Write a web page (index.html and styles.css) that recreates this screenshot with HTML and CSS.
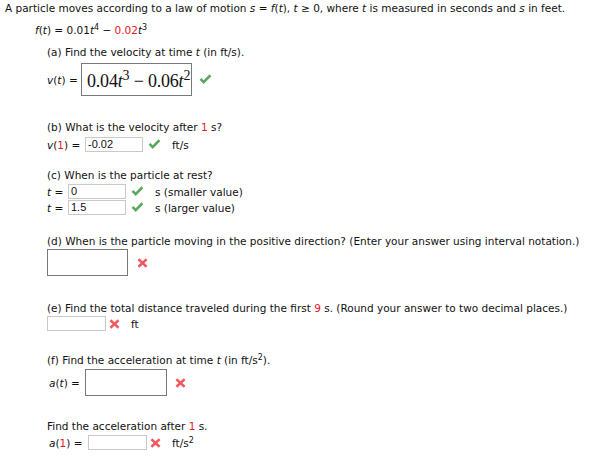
FILE: index.html
```html
<!DOCTYPE html>
<html>
<head>
<meta charset="utf-8">
<link rel="stylesheet" href="styles.css">
</head>
<body>
<div class="page">
  <p class="line intro">A particle moves according to a law of motion <i>s</i> = <i>f</i>(<i>t</i>), <i>t</i> ≥ 0, where <i>t</i> is measured in seconds and <i>s</i> in feet.</p>
  <p class="line eq"><i>f</i>(<i>t</i>) = 0.01<i>t</i><sup>4</sup> − <span class="red">0.02</span><i>t</i><sup>3</sup></p>

  <p class="line part gap-a">(a) Find the velocity at time <i>t</i> (in ft/s).</p>
  <div class="row part row-vt">
    <span class="lbl lbl-vt"><i>v</i>(<i>t</i>) =</span>
    <span class="mathbox"><span class="math">0.04<i>t</i><sup>3</sup> − 0.06<i>t</i><sup>2</sup></span></span>
    <svg class="ok ok-vt" viewBox="0 0 14 12"><path d="M0.6 6.4 L2.6 4.4 L5 6.8 L11.4 0.4 L13.4 2.4 L5 10.8 Z" fill="#5aa85c"/></svg>
  </div>

  <p class="line part gap-b">(b) What is the velocity after <span class="red">1</span> s?</p>
  <div class="row part row-small gap-b2">
    <span class="lbl lbl-v1"><i>v</i>(<span class="red">1</span>) =</span>
    <span class="inp inp-v1">-0.02</span>
    <svg class="ok" viewBox="0 0 14 12"><path d="M0.6 6.4 L2.6 4.4 L5 6.8 L11.4 0.4 L13.4 2.4 L5 10.8 Z" fill="#5aa85c"/></svg>
    <span class="unit">ft/s</span>
  </div>

  <p class="line part gap-c">(c) When is the particle at rest?</p>
  <div class="rest part">
    <div class="row row-small">
      <span class="lbl lbl-t"><i>t</i> =</span>
      <span class="inp inp-t">0</span>
      <svg class="ok" viewBox="0 0 14 12"><path d="M0.6 6.4 L2.6 4.4 L5 6.8 L11.4 0.4 L13.4 2.4 L5 10.8 Z" fill="#5aa85c"/></svg>
      <span class="unit">s (smaller value)</span>
    </div>
    <div class="row row-small">
      <span class="lbl lbl-t"><i>t</i> =</span>
      <span class="inp inp-t">1.5</span>
      <svg class="ok" viewBox="0 0 14 12"><path d="M0.6 6.4 L2.6 4.4 L5 6.8 L11.4 0.4 L13.4 2.4 L5 10.8 Z" fill="#5aa85c"/></svg>
      <span class="unit">s (larger value)</span>
    </div>
  </div>

  <p class="line part gap-d">(d) When is the particle moving in the positive direction? (Enter your answer using interval notation.)</p>
  <div class="row part row-d">
    <span class="bigbox box-d"></span>
    <svg class="bad bad-d" viewBox="0 0 12 11"><path d="M0.6 2.4 L2.4 0.4 L6 3.6 L9.6 0.4 L11.4 2.4 L8 5.5 L11.4 8.6 L9.6 10.6 L6 7.4 L2.4 10.6 L0.6 8.6 L4 5.5 Z" fill="#f2575e"/></svg>
  </div>

  <p class="line part gap-e">(e) Find the total distance traveled during the first <span class="red">9</span> s. (Round your answer to two decimal places.)</p>
  <div class="row part row-small">
    <span class="inp inp-e"></span>
    <svg class="bad bad-e" viewBox="0 0 12 11"><path d="M0.6 2.4 L2.4 0.4 L6 3.6 L9.6 0.4 L11.4 2.4 L8 5.5 L11.4 8.6 L9.6 10.6 L6 7.4 L2.4 10.6 L0.6 8.6 L4 5.5 Z" fill="#f2575e"/></svg>
    <span class="unit unit-e">ft</span>
  </div>

  <p class="line part gap-f">(f) Find the acceleration at time <i>t</i> (in ft/s<sup class="s2">2</sup>).</p>
  <div class="row part row-d gap-f2">
    <span class="lbl lbl-a"><i>a</i>(<i>t</i>) =</span>
    <span class="bigbox box-f"></span>
    <svg class="bad bad-f" viewBox="0 0 12 11"><path d="M0.6 2.4 L2.4 0.4 L6 3.6 L9.6 0.4 L11.4 2.4 L8 5.5 L11.4 8.6 L9.6 10.6 L6 7.4 L2.4 10.6 L0.6 8.6 L4 5.5 Z" fill="#f2575e"/></svg>
  </div>

  <p class="line part gap-g">Find the acceleration after <span class="red">1</span> s.</p>
  <div class="row part row-small gap-f2">
    <span class="lbl lbl-a1"><i>a</i>(<span class="red">1</span>) =</span>
    <span class="inp inp-a1"></span>
    <svg class="bad bad-e" viewBox="0 0 12 11"><path d="M0.6 2.4 L2.4 0.4 L6 3.6 L9.6 0.4 L11.4 2.4 L8 5.5 L11.4 8.6 L9.6 10.6 L6 7.4 L2.4 10.6 L0.6 8.6 L4 5.5 Z" fill="#f2575e"/></svg>
    <span class="unit unit-a1">ft/s<sup class="s2">2</sup></span>
  </div>
</div>
</body>
</html>
```

FILE: styles.css
```css
html, body {
  margin: 0;
  padding: 0;
  background: #fff;
}

.page {
  font-family: "DejaVu Sans", Verdana, sans-serif;
  font-size: 10.5px;
  color: #111;
  padding-left: 5px;
  width: 596px;
}

.line {
  margin: 0;
  line-height: 16px;
  height: 16px;
  white-space: nowrap;
}

i {
  font-style: italic;
}

sup {
  font-size: 8px;
  line-height: 0;
  vertical-align: 4px;
}

.red {
  color: #e8141c;
}

.eq {
  margin-top: 6px;
  margin-left: 30px;
}

.part {
  margin-left: 42px;
}

.gap-a { margin-top: 6px; }
.gap-b { margin-top: 23px; }
.gap-b2 { margin-top: 2px; }
.gap-c { margin-top: 15px; }
.gap-d { margin-top: 18px; }
.gap-e { margin-top: 24px; }
.gap-f { margin-top: 21px; }
.gap-f2 { margin-top: 1px; }
.gap-g { margin-top: 22px; }

.row {
  display: flex;
  align-items: center;
  white-space: nowrap;
}

.row-vt {
  margin-top: 3px;
  height: 33px;
}

.row-small {
  height: 15px;
}

.rest {
  display: flex;
  flex-direction: column;
  gap: 1px;
  margin-top: 1px;
}

.row-d {
  height: 27px;
}

.lbl {
  margin-right: 3px;
}

.lbl-vt { width: 34px; margin-right: 0; }
.lbl-v1 { width: 38px; margin-right: 0; }
.lbl-t { width: 21px; margin-right: 0; }
.lbl-a { width: 38px; margin-right: 0; padding-left: 2px; box-sizing: border-box; }
.lbl-a1 { width: 41px; margin-right: 0; padding-left: 2px; box-sizing: border-box; }

.mathbox {
  box-sizing: border-box;
  width: 111px;
  height: 33px;
  border: 1px solid #7a7a7a;
  display: flex;
  align-items: center;
  padding-left: 5px;
}

.math {
  font-family: "Liberation Serif", "Times New Roman", serif;
  font-size: 18px;
  color: #111;
  padding-top: 4px;
  letter-spacing: -0.2px;
}

.math sup {
  font-size: 14px;
  vertical-align: 7px;
}

.ok {
  width: 13px;
  height: 11px;
  margin-left: 5px;
}

.ok-vt {
  margin-left: 7px;
}

.inp {
  box-sizing: border-box;
  height: 15px;
  border: 1px solid #c9c9c9;
  font-family: "Liberation Sans", Arial, sans-serif;
  font-size: 11px;
  line-height: 13px;
  padding-left: 2px;
  color: #111;
}

.inp-v1 { width: 58px; }
.inp-t { width: 58px; }
.inp-e { width: 59px; }
.inp-a1 { width: 59px; }

.unit {
  margin-left: 11px;
}

.bigbox {
  box-sizing: border-box;
  height: 27px;
  border: 1px solid #7a7a7a;
}

.box-d { width: 81px; }
.box-f { width: 82px; }

.bad {
  width: 11px;
  height: 10px;
}

.bad-d { margin-left: 9px; }
.bad-e { margin-left: 3px; }
.bad-f { margin-left: 8px; }

.unit-e { margin-left: 11px; }
.unit-a1 { margin-left: 11px; }

.s2 {
  font-size: 8px;
  vertical-align: 4px;
}
```
